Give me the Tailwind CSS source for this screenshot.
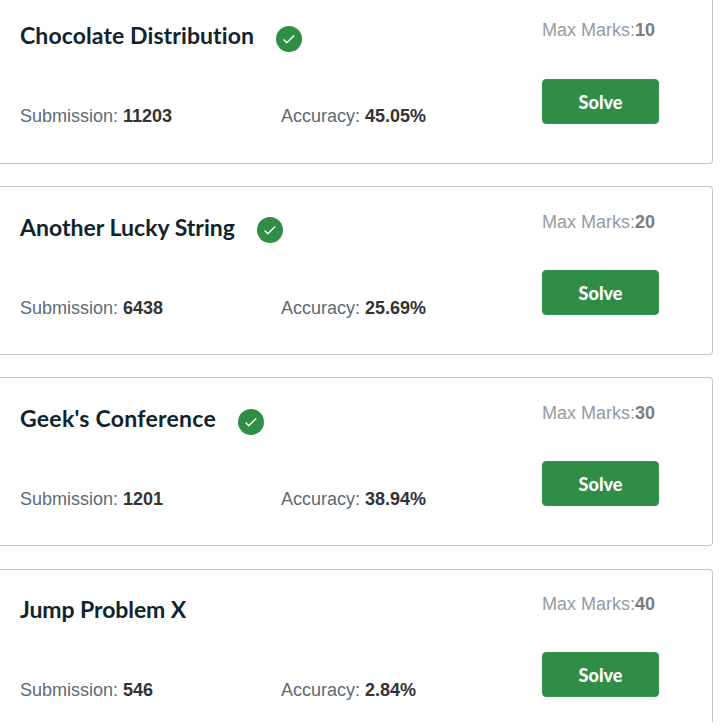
<!DOCTYPE html>
<html lang="en">
<head>
<meta charset="utf-8">
<title>Problems</title>
<script src="https://cdn.jsdelivr.net/npm/@tailwindcss/browser@4"></script>
</head>
<body class="bg-white overflow-hidden font-['Liberation_Sans',Arial,sans-serif]">
<main class="h-[722px] overflow-hidden">
<div class="-mt-[5.1px] flex flex-col gap-[22.25px]">

<article class="flex h-[169px] w-[713px] shrink-0 rounded-r-[4px] border border-l-0 border-[#c4c6c8] pl-5 text-[18px] leading-5 text-[#5b6b75]">
  <div class="w-[522px]">
    <div class="flex h-[99.5px] items-start pt-[24.5px]">
      <h2 class="whitespace-nowrap font-['Lato'] text-[23px] font-bold leading-[30px] tracking-[0.1px] text-[#10242f]">Chocolate Distribution</h2>
      <svg class="ml-[22px] mt-[5.7px] size-[26px] shrink-0" viewBox="0 0 26 26" fill="none"><circle cx="13" cy="13" r="13" fill="#2f8d46"/><path d="M7.6 13.5l3.1 3.2 7.5-7.3" stroke="#fff" stroke-width="1.4"/></svg>
    </div>
    <div class="flex pt-[11px]"><p class="w-[261px]">Submission: <b class="text-[#333]">11203</b></p><p>Accuracy: <b class="text-[#333]">45.05%</b></p></div>
  </div>
  <div class="pt-[24.4px]">
    <p class="text-[#929ca2]">Max Marks:<b class="text-[#7b7d7e]">10</b></p>
    <button class="mt-[38.3px] block h-[45px] w-[117px] rounded-[4px] border border-[#31964a] bg-[#2f8d46] pt-[1px] font-['Lato'] text-[18px] font-black leading-5 text-white">Solve</button>
  </div>
</article>

<article class="flex h-[169px] w-[713px] shrink-0 rounded-r-[4px] border border-l-0 border-[#c4c6c8] pl-5 text-[18px] leading-5 text-[#5b6b75]">
  <div class="w-[522px]">
    <div class="flex h-[99.5px] items-start pt-[24.5px]">
      <h2 class="whitespace-nowrap font-['Lato'] text-[23px] font-bold leading-[30px] tracking-[0.02px] text-[#10242f]">Another Lucky String</h2>
      <svg class="ml-[22px] mt-[5.7px] size-[26px] shrink-0" viewBox="0 0 26 26" fill="none"><circle cx="13" cy="13" r="13" fill="#2f8d46"/><path d="M7.6 13.5l3.1 3.2 7.5-7.3" stroke="#fff" stroke-width="1.4"/></svg>
    </div>
    <div class="flex pt-[11px]"><p class="w-[261px]">Submission: <b class="text-[#333]">6438</b></p><p>Accuracy: <b class="text-[#333]">25.69%</b></p></div>
  </div>
  <div class="pt-[24.4px]">
    <p class="text-[#929ca2]">Max Marks:<b class="text-[#7b7d7e]">20</b></p>
    <button class="mt-[38.3px] block h-[45px] w-[117px] rounded-[4px] border border-[#31964a] bg-[#2f8d46] pt-[1px] font-['Lato'] text-[18px] font-black leading-5 text-white">Solve</button>
  </div>
</article>

<article class="flex h-[169px] w-[713px] shrink-0 rounded-r-[4px] border border-l-0 border-[#c4c6c8] pl-5 text-[18px] leading-5 text-[#5b6b75]">
  <div class="w-[522px]">
    <div class="flex h-[99.5px] items-start pt-[24.5px]">
      <h2 class="whitespace-nowrap font-['Lato'] text-[23px] font-bold leading-[30px] tracking-[0.26px] text-[#10242f]">Geek's Conference</h2>
      <svg class="ml-[22px] mt-[5.7px] size-[26px] shrink-0" viewBox="0 0 26 26" fill="none"><circle cx="13" cy="13" r="13" fill="#2f8d46"/><path d="M7.6 13.5l3.1 3.2 7.5-7.3" stroke="#fff" stroke-width="1.4"/></svg>
    </div>
    <div class="flex pt-[11px]"><p class="w-[261px]">Submission: <b class="text-[#333]">1201</b></p><p>Accuracy: <b class="text-[#333]">38.94%</b></p></div>
  </div>
  <div class="pt-[24.4px]">
    <p class="text-[#929ca2]">Max Marks:<b class="text-[#7b7d7e]">30</b></p>
    <button class="mt-[38.3px] block h-[45px] w-[117px] rounded-[4px] border border-[#31964a] bg-[#2f8d46] font-['Lato'] text-[18px] font-black leading-5 text-white">Solve</button>
  </div>
</article>

<article class="flex h-[169px] w-[713px] shrink-0 rounded-r-[4px] border border-l-0 border-[#c4c6c8] pl-5 text-[18px] leading-5 text-[#5b6b75]">
  <div class="w-[522px]">
    <div class="flex h-[99.5px] items-start pt-[24.5px]">
      <h2 class="whitespace-nowrap font-['Lato'] text-[23px] font-bold leading-[30px] tracking-[-0.08px] text-[#10242f]">Jump Problem X</h2>
    </div>
    <div class="flex pt-[11px]"><p class="w-[261px]">Submission: <b class="text-[#333]">546</b></p><p>Accuracy: <b class="text-[#333]">2.84%</b></p></div>
  </div>
  <div class="pt-[24.4px]">
    <p class="text-[#929ca2]">Max Marks:<b class="text-[#7b7d7e]">40</b></p>
    <button class="mt-[38.3px] block h-[45px] w-[117px] rounded-[4px] border border-[#31964a] bg-[#2f8d46] font-['Lato'] text-[18px] font-black leading-5 text-white">Solve</button>
  </div>
</article>

</div>
</main>
</body>
</html>
